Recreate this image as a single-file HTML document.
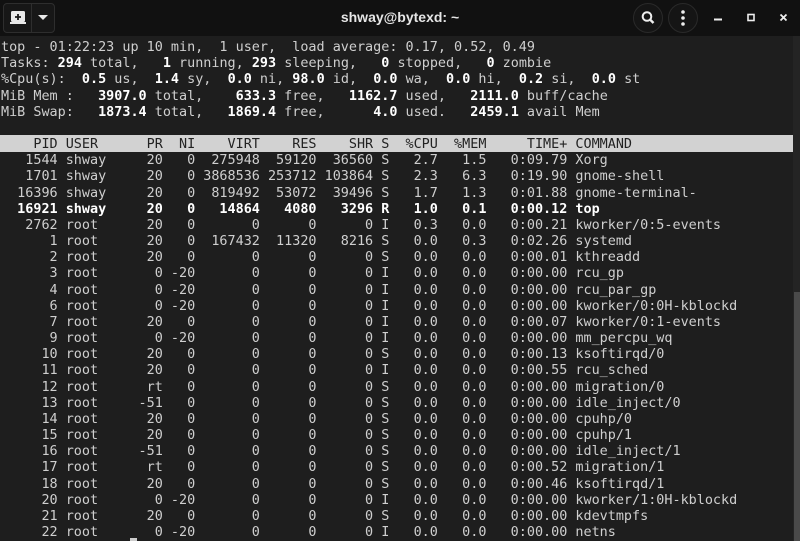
<!DOCTYPE html>
<html><head><meta charset="utf-8"><style>
html,body{margin:0;padding:0;width:800px;height:541px;overflow:hidden;background:#1e1e1e}
#tb{position:absolute;left:0;top:0;width:800px;height:36px;background:#111}
#lb{position:absolute;left:3px;top:3px;width:50px;height:28px;border:1px solid #2e2e2e;border-radius:4px;background:#171717}
#lb .sep{position:absolute;left:27px;top:0;width:1px;height:28px;background:#2e2e2e}
#title{position:absolute;left:0;width:800px;top:9px;text-align:center;font:bold 14px "Liberation Sans",sans-serif;color:#e6e6e6}
.circ{position:absolute;top:3px;width:28px;height:28px;border-radius:50%;border:1px solid #2a2a2a;background:#151515}
pre{position:absolute;left:1px;margin:0;font-family:"DejaVu Sans Mono","Liberation Mono",monospace;font-size:13.45px;line-height:16.17px;color:#cfcfcf;white-space:pre}
b{color:#fff;font-weight:bold}
#hdr{position:absolute;left:0;top:135px;width:793px;height:17px;background:#d2d2d2}
#sb{position:absolute;left:793px;top:36px;width:7px;height:505px;background:#242424}
#sbt{position:absolute;left:794px;top:292px;width:6px;height:249px;background:#4a4a4a}
#cur{position:absolute;left:130px;top:538px;width:7px;height:3px;background:#ccc}
</style></head><body>
<div id="tb">
 <div id="lb"><div class="sep"></div>
  <svg style="position:absolute;left:6px;top:7px" width="16" height="14" viewBox="0 0 16 14"><rect x="1" y="0" width="14" height="11" rx="1.5" fill="#e8e8e8"/><rect x="0" y="11" width="16" height="2" fill="#e8e8e8"/><path d="M8 3v6M5 6h6" stroke="#171717" stroke-width="1.8"/></svg>
  <svg style="position:absolute;left:34px;top:11px" width="10" height="6"><path d="M0 0h10L5 5z" fill="#e8e8e8"/></svg>
 </div>
 <div id="title">shway@bytexd: ~</div>
 <div class="circ" style="left:633px"><svg width="28" height="28"><circle cx="13" cy="12.5" r="4.3" stroke="#eee" stroke-width="2" fill="none"/><path d="M16 15.5l3.5 3.5" stroke="#eee" stroke-width="2.4"/></svg></div>
 <div class="circ" style="left:668px"><svg width="28" height="28"><circle cx="14" cy="8" r="1.8" fill="#eee"/><circle cx="14" cy="14" r="1.8" fill="#eee"/><circle cx="14" cy="20" r="1.8" fill="#eee"/></svg></div>
 <svg style="position:absolute;left:710px;top:10px" width="80" height="16"><path d="M4 9.5h8" stroke="#eee" stroke-width="2"/><rect x="38" y="4.5" width="6" height="6" stroke="#eee" stroke-width="1.6" fill="none"/><path d="M70.5 4.5l6 6M76.5 4.5l-6 6" stroke="#eee" stroke-width="1.8"/></svg>
</div>
<div id="hdr"></div>
<div id="sb"></div><div id="sbt"></div>
<pre style="top:40px">top - 01:22:23 up 10 min,  1 user,  load average: 0.17, 0.52, 0.49
Tasks: <b>294</b> total,   <b>1</b> running, <b>293</b> sleeping,   <b>0</b> stopped,   <b>0</b> zombie
%Cpu(s):  <b>0.5</b> us,  <b>1.4</b> sy,  <b>0.0</b> ni, <b>98.0</b> id,  <b>0.0</b> wa,  <b>0.0</b> hi,  <b>0.2</b> si,  <b>0.0</b> st
MiB Mem :   <b>3907.0</b> total,    <b>633.3</b> free,   <b>1162.7</b> used,   <b>2111.0</b> buff/cache
MiB Swap:   <b>1873.4</b> total,   <b>1869.4</b> free,      <b>4.0</b> used.   <b>2459.1</b> avail Mem

<span style="color:#222">    PID USER      PR  NI    VIRT    RES    SHR S  %CPU  %MEM     TIME+ COMMAND</span>
   1544 shway     20   0  275948  59120  36560 S   2.7   1.5   0:09.79 Xorg
   1701 shway     20   0 3868536 253712 103864 S   2.3   6.3   0:19.90 gnome-shell
  16396 shway     20   0  819492  53072  39496 S   1.7   1.3   0:01.88 gnome-terminal-
<b>  16921 shway     20   0   14864   4080   3296 R   1.0   0.1   0:00.12 top</b>
   2762 root      20   0       0      0      0 I   0.3   0.0   0:00.21 kworker/0:5-events
      1 root      20   0  167432  11320   8216 S   0.0   0.3   0:02.26 systemd
      2 root      20   0       0      0      0 S   0.0   0.0   0:00.01 kthreadd
      3 root       0 -20       0      0      0 I   0.0   0.0   0:00.00 rcu_gp
      4 root       0 -20       0      0      0 I   0.0   0.0   0:00.00 rcu_par_gp
      6 root       0 -20       0      0      0 I   0.0   0.0   0:00.00 kworker/0:0H-kblockd
      7 root      20   0       0      0      0 I   0.0   0.0   0:00.07 kworker/0:1-events
      9 root       0 -20       0      0      0 I   0.0   0.0   0:00.00 mm_percpu_wq
     10 root      20   0       0      0      0 S   0.0   0.0   0:00.13 ksoftirqd/0
     11 root      20   0       0      0      0 I   0.0   0.0   0:00.55 rcu_sched
     12 root      rt   0       0      0      0 S   0.0   0.0   0:00.00 migration/0
     13 root     -51   0       0      0      0 S   0.0   0.0   0:00.00 idle_inject/0
     14 root      20   0       0      0      0 S   0.0   0.0   0:00.00 cpuhp/0
     15 root      20   0       0      0      0 S   0.0   0.0   0:00.00 cpuhp/1
     16 root     -51   0       0      0      0 S   0.0   0.0   0:00.00 idle_inject/1
     17 root      rt   0       0      0      0 S   0.0   0.0   0:00.52 migration/1
     18 root      20   0       0      0      0 S   0.0   0.0   0:00.46 ksoftirqd/1
     20 root       0 -20       0      0      0 I   0.0   0.0   0:00.00 kworker/1:0H-kblockd
     21 root      20   0       0      0      0 S   0.0   0.0   0:00.00 kdevtmpfs
     22 root       0 -20       0      0      0 I   0.0   0.0   0:00.00 netns</pre>
<div id="cur"></div>
</body></html>
